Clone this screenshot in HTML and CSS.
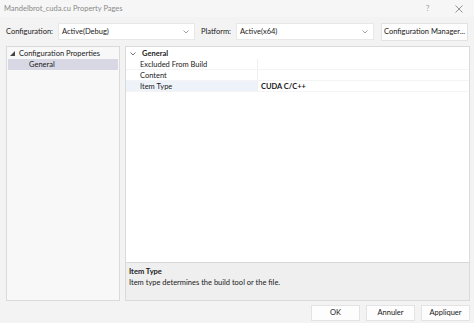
FILE: index.html
```html
<!DOCTYPE html>
<html>
<head>
<meta charset="utf-8">
<link rel="stylesheet" href="styles.css">
</head>
<body>
<div class="dialog">
  <div class="titlebar">
    <span class="title">Mandelbrot_cuda.cu Property Pages</span>
    <span class="help">?</span>
    <span class="close">
      <svg width="8" height="8" viewBox="0 0 8 8"><path d="M0.5 0.5L7.5 7.5M7.5 0.5L0.5 7.5" stroke="#8a8a8a" stroke-width="0.9"/></svg>
    </span>
  </div>
  <div class="configrow">
    <span class="lbl">Configuration:</span>
    <div class="combo combo-config"><span>Active(Debug)</span><svg class="chev" width="6" height="4" viewBox="0 0 6 4"><path d="M0.5 0.5L3 3L5.5 0.5" fill="none" stroke="#888" stroke-width="0.8"/></svg></div>
    <span class="lbl lbl-plat">Platform:</span>
    <div class="combo combo-plat"><span>Active(x64)</span><svg class="chev" width="6" height="4" viewBox="0 0 6 4"><path d="M0.5 0.5L3 3L5.5 0.5" fill="none" stroke="#888" stroke-width="0.8"/></svg></div>
    <div class="btn btn-mgr">Configuration Manager...</div>
  </div>
  <div class="main">
    <div class="tree">
      <div class="node"><svg class="tri" width="5" height="5" viewBox="0 0 5 5"><path d="M5 0L5 5L0 5Z" fill="#444"/></svg>Configuration Properties</div>
      <div class="node sel">General</div>
    </div>
    <div class="right">
      <div class="grid">
        <div class="row head"><svg class="gchev" width="6" height="4" viewBox="0 0 6 4"><path d="M0.5 0.5L3 3L5.5 0.5" fill="none" stroke="#555" stroke-width="0.8"/></svg><span>General</span></div>
        <div class="row"><span class="name">Excluded From Build</span><span class="val"></span></div>
        <div class="row"><span class="name">Content</span><span class="val"></span></div>
        <div class="row cur"><span class="name">Item Type</span><span class="val b">CUDA C/C++</span></div>
      </div>
      <div class="desc">
        <div class="dt">Item Type</div>
        <div class="dd">Item type determines the build tool or the file.</div>
      </div>
    </div>
  </div>
  <div class="footer">
    <div class="btn fbtn">OK</div>
    <div class="btn fbtn">Annuler</div>
    <div class="btn fbtn">Appliquer</div>
  </div>
</div>
</body>
</html>
```
FILE: styles.css
```css
* { box-sizing: border-box; }
html, body { margin: 0; padding: 0; }
body {
  width: 474px; height: 323px; overflow: hidden;
  background: #f3f3f3;
  font-family: Lato, "Open Sans", sans-serif;
  font-size: 7.5px;
  color: #1a1a1a;
}
.dialog { display: flex; flex-direction: column; height: 323px; }
.titlebar {
  height: 17px; display: flex; align-items: center; padding-left: 4px;
  background: #f6f6f6;
}
.title { color: #8a8a8a; flex: 1; }
.help { color: #999; width: 29px; }
.close { width: 14px; display: flex; margin-right: 5px; }
.configrow {
  display: flex; align-items: center; height: 19px; margin-top: 5px; padding: 0 6px;
}
.lbl { margin-right: 5px; }
.lbl-plat { margin-left: 6px; margin-right: 5px; }
.combo {
  height: 17px; background: #fff; border: 1px solid #e8e8e8;
  display: flex; align-items: center; justify-content: space-between; padding: 0 5px 0 3px;
}
.combo-config { width: 137px; }
.combo-plat { width: 138px; }
.chev { margin-top: 1px; }
.btn {
  background: #fdfdfd; border: 1px solid #e3e3e3; display: flex; align-items: center; justify-content: center;
  height: 18px;
}
.btn-mgr { flex: 1; margin-left: 7px; }
.main { display: flex; flex: 1; padding: 5px 4px 0 6px; gap: 5px; min-height: 0; }
.tree {
  width: 114px; height: 255px; background: #f8f8f8; border: 1px solid #dadada;
  padding-top: 1px;
}
.node { height: 11px; display: flex; align-items: center; padding-left: 3px; }
.tri { margin-right: 4px; margin-top: -1px; }
.node.sel { background: #d8d8e4; padding-left: 21px; margin: 0 1px; }
.right {
  flex: 1; height: 255px; border: 1px solid #dadada; display: flex; flex-direction: column;
}
.grid { flex: 1; background: #fff; padding-top: 1px; }
.row { height: 11px; display: flex; align-items: center; border-bottom: 1px solid #f4f4f6; }
.row.head { font-weight: bold; border-bottom: none; padding-left: 4px; }
.gchev { margin-right: 6px; }
.row .name { width: 132px; padding-left: 14px; border-right: 1px solid #f0f0f0; height: 100%; display: flex; align-items: center; }
.row .val { flex: 1; padding-left: 3px; }
.row.cur .name { background: #eef3fa; }
.b { font-weight: bold; }
.desc {
  height: 38px; background: #efefef; border-top: 1px solid #d8d8d8; padding: 4px 3px;
}
.dt { font-weight: bold; height: 11px; }
.dd { margin-top: 0px; }
.footer { display: flex; justify-content: flex-end; gap: 6px; padding: 2px 4px 0 0; height: 23px; align-items: center; }
.fbtn { width: 49px; height: 16px; }
```
